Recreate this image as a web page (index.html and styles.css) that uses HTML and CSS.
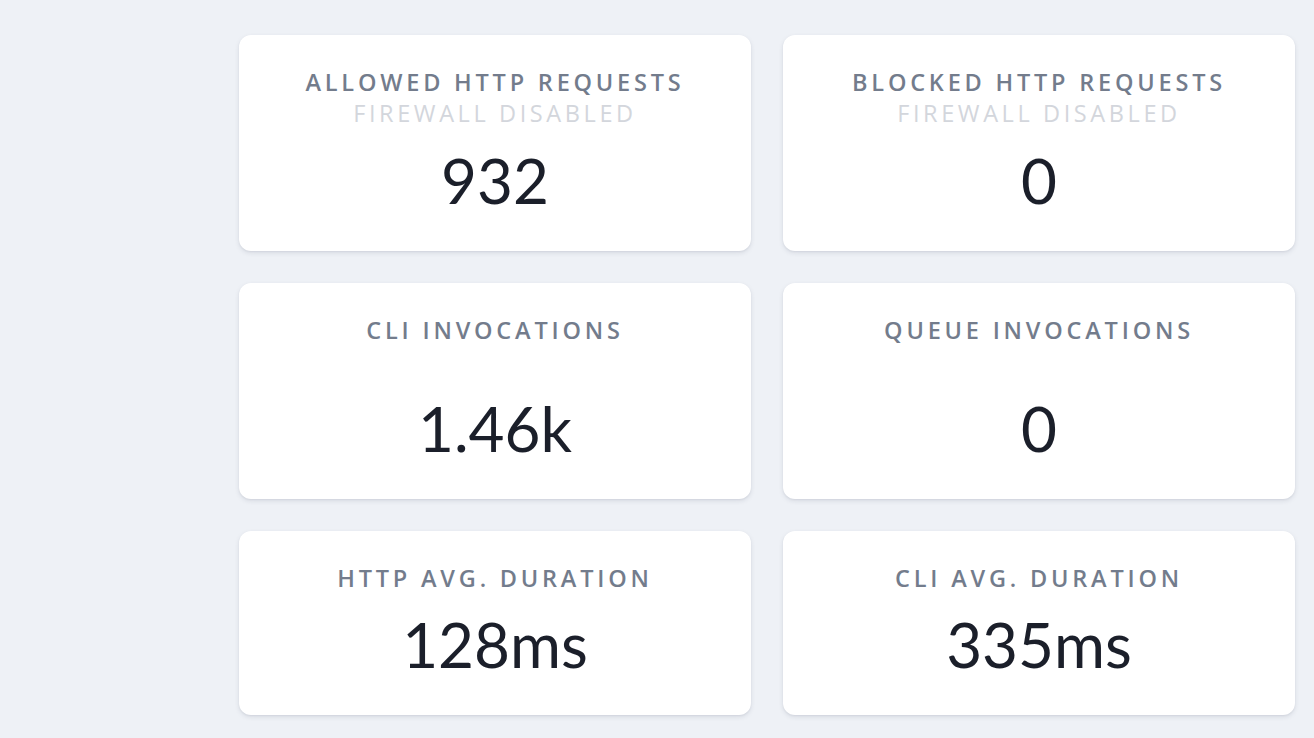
FILE: index.html
```html
<!DOCTYPE html>
<html lang="en">
<head>
<meta charset="utf-8">
<title>Stats</title>
<link rel="stylesheet" href="styles.css">
</head>
<body>
<main class="grid">
  <section class="card">
    <div class="label">Allowed HTTP Requests</div>
    <div class="sub">Firewall Disabled</div>
    <div class="value">932</div>
  </section>
  <section class="card">
    <div class="label">Blocked HTTP Requests</div>
    <div class="sub">Firewall Disabled</div>
    <div class="value">0</div>
  </section>
  <section class="card">
    <div class="label">CLI Invocations</div>
    <div class="sub sub-empty">&nbsp;</div>
    <div class="value">1.46k</div>
  </section>
  <section class="card">
    <div class="label">Queue Invocations</div>
    <div class="sub sub-empty">&nbsp;</div>
    <div class="value">0</div>
  </section>
  <section class="card">
    <div class="label">HTTP Avg. Duration</div>
    <div class="value">128ms</div>
  </section>
  <section class="card">
    <div class="label">CLI Avg. Duration</div>
    <div class="value">335ms</div>
  </section>
</main>
</body>
</html>
```
FILE: styles.css
```css
html, body {
  margin: 0;
  padding: 0;
}
body {
  background: #eef1f6;
  font-family: "Open Sans", "Noto Sans", sans-serif;
  width: 1314px;
  height: 738px;
  overflow: hidden;
}
.grid {
  display: grid;
  grid-template-columns: 512px 512px;
  column-gap: 32px;
  row-gap: 32px;
  padding: 35px 0 0 239px;
}
.card {
  background: #ffffff;
  border-radius: 12px;
  box-shadow: 0 2px 5px rgba(30, 40, 70, 0.10), 0 1px 2px rgba(30, 40, 70, 0.06);
  display: flex;
  flex-direction: column;
  align-items: center;
  padding: 35px 10px 34px;
  text-align: center;
}
.label {
  font-size: 23.5px;
  line-height: 24px;
  font-weight: 600;
  letter-spacing: 3.8px;
  text-transform: uppercase;
  color: #737c8c;
  white-space: nowrap;
}
.sub {
  margin-top: 6px;
  font-size: 23.5px;
  line-height: 26px;
  font-weight: 400;
  letter-spacing: 3.6px;
  text-transform: uppercase;
  color: #d3d6dc;
  white-space: nowrap;
}
.sub-empty {
  visibility: hidden;
}
.value {
  margin-top: 17px;
  font-family: "Lato", "Open Sans", sans-serif;
  font-size: 62px;
  line-height: 74px;
  font-weight: 400;
  color: #1b1f2a;
}
```
